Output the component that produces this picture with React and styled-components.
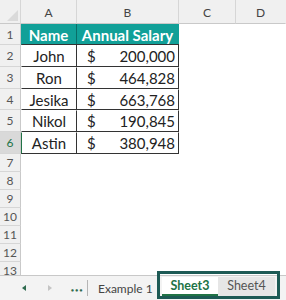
import React from "react";
import styled, { createGlobalStyle } from "styled-components";

const Global = createGlobalStyle`
	html, body {
		margin: 0;
		padding: 0;
		background: #fff;
		overflow: hidden;
	}
	body {
		font-family: Lato, "Liberation Sans", sans-serif;
	}
`;

const cols = "21px 56px 102px 57px 50px";
const rowHeights = [24, 21, 22, 22, 21, 22, 22, 18, 18, 18, 18, 18, 18, 18];

const data = [
	{ name: "John", salary: "200,000" },
	{ name: "Ron", salary: "464,828" },
	{ name: "Jesika", salary: "663,768" },
	{ name: "Nikol", salary: "190,845" },
	{ name: "Astin", salary: "380,948" }
];

const Page = styled.div`
	width: 286px;
	height: 300px;
	display: flex;
	flex-direction: column;
	overflow: hidden;
`;

const Sheet = styled.div`
	height: 276px;
	overflow: hidden;
	display: grid;
	grid-template-columns: ${cols};
	grid-template-rows: ${rowHeights.map(h => h + "px").join(" ")};
`;

const Corner = styled.div`
	background: #f0f0f0;
	border-bottom: 1px solid #c9c9c9;
	border-right: 1px solid #d6d6d6;
	position: relative;
	&::after {
		content: "";
		position: absolute;
		right: 2px;
		bottom: 2px;
		border-style: solid;
		border-width: 0 0 11px 11px;
		border-color: transparent transparent #dadada transparent;
	}
`;

const ColHead = styled.div`
	background: #f0f0f0;
	border-bottom: 1px solid #c9c9c9;
	border-right: 1px solid ${p => (p.$last ? "transparent" : "#d6d6d6")};
	display: flex;
	align-items: flex-end;
	justify-content: center;
	padding-bottom: 3px;
	font-size: 12px;
	color: #444;
`;

const RowHead = styled.div`
	background: ${p => (p.$active ? "#d9d9d9" : "#f0f0f0")};
	border-bottom: 1px solid #d6d6d6;
	border-right: 1px solid #c9c9c9;
	display: flex;
	align-items: center;
	justify-content: center;
	font-size: 12px;
	color: ${p => (p.$active ? "#217346" : "#555")};
`;

const TitleCell = styled.div`
	background: #11a098;
	color: #fff;
	font-weight: 700;
	font-size: 15px;
	display: flex;
	align-items: center;
	justify-content: center;
	border-right: 1px solid ${p => (p.$last ? "#11a098" : "#0a6e68")};
	white-space: nowrap;
`;

const NameCell = styled.div`
	display: flex;
	align-items: center;
	justify-content: center;
	font-size: 15px;
	color: #222;
	border-bottom: 1px solid #333;
	border-right: 1px solid #333;
	border-left: 1px solid ${p => (p.$active ? "#217346" : "transparent")};
	border-top: 1px solid ${p => (p.$first ? "#333" : "transparent")};
	margin-top: ${p => (p.$first ? "-1px" : "0")};
`;

const MoneyCell = styled.div`
	display: flex;
	align-items: center;
	justify-content: space-between;
	padding: 0 3px 0 10px;
	font-size: 15px;
	color: #222;
	border-bottom: 1px solid #333;
	border-right: 1px solid #333;
	border-top: 1px solid ${p => (p.$first ? "#333" : "transparent")};
	margin-top: ${p => (p.$first ? "-1px" : "0")};
`;

const Empty = styled.div``;

const TabBar = styled.div`
	height: 24px;
	background: #f3f3f3;
	border-top: 1px solid #c8c8c8;
	display: flex;
	align-items: center;
	position: relative;
`;

const Arrow = styled.span`
	width: 0;
	height: 0;
	flex: none;
	border-style: solid;
	border-width: 3px ${p => (p.$left ? "4px" : "0")} 3px ${p => (p.$left ? "0" : "4px")};
	border-color: transparent ${p => (p.$left ? p.$color : "transparent")} transparent ${p => (p.$left ? "transparent" : p.$color)};
	margin-left: ${p => p.$ml}px;
`;

const Dots = styled.span`
	margin-left: 19px;
	width: 9px;
	flex: none;
	font-size: 5px;
	color: #2f6b4f;
	line-height: 1;
	padding-top: 5px;
	white-space: nowrap;
`;

const Divider = styled.span`
	width: 1px;
	height: 16px;
	background: #b5b5b5;
	margin-left: 7px;
	flex: none;
`;

const Tab = styled.span`
	font-size: 12px;
	color: #444;
	margin-left: 10px;
	width: 56px;
	flex: none;
	white-space: nowrap;
`;

const TabGroup = styled.div`
	margin-left: 8px;
	margin-top: -4px;
	display: flex;
	flex: none;
	height: 19px;
	position: relative;
	&::after {
		content: "";
		position: absolute;
		left: -5px;
		right: -5px;
		top: -6px;
		bottom: -3px;
		border: 3px solid #1d5a55;
	}
`;

const SheetTab = styled.div`
	width: ${p => p.$w}px;
	display: flex;
	align-items: center;
	justify-content: center;
	font-size: 12.5px;
	background: ${p => (p.$active ? "#fff" : "#e6e6e6")};
	color: ${p => (p.$active ? "#217346" : "#555")};
	font-weight: ${p => (p.$active ? 700 : 400)};
	border-bottom: 2px solid ${p => (p.$active ? "#217346" : "transparent")};
	box-sizing: border-box;
`;

export default function App() {
	return (
		<Page>
			<Global />
			<Sheet>
				<Corner />
				<ColHead>A</ColHead>
				<ColHead>B</ColHead>
				<ColHead>C</ColHead>
				<ColHead $last>D</ColHead>

				<RowHead>1</RowHead>
				<TitleCell>Name</TitleCell>
				<TitleCell $last>Annual Salary</TitleCell>
				<Empty />
				<Empty />

				{data.map((d, i) => (
					<React.Fragment key={d.name}>
						<RowHead $active={i === 4}>{i + 2}</RowHead>
						<NameCell $first={i === 0} $active={i === 4}>{d.name}</NameCell>
						<MoneyCell $first={i === 0}>
							<span>$</span>
							<span>{d.salary}</span>
						</MoneyCell>
						<Empty />
						<Empty />
					</React.Fragment>
				))}

				{[7, 8, 9, 10, 11, 12, 13].map(n => (
					<React.Fragment key={n}>
						<RowHead>{n}</RowHead>
						<Empty />
						<Empty />
						<Empty />
						<Empty />
					</React.Fragment>
				))}
			</Sheet>
			<TabBar>
				<Arrow $left $color="#2f6b4f" $ml={22} />
				<Arrow $color="#c4c4c4" $ml={22} />
				<Dots>● ● ●</Dots>
				<Divider />
				<Tab>Example 1</Tab>
				<TabGroup>
					<SheetTab $active $w={56}>Sheet3</SheetTab>
					<SheetTab $w={57}>Sheet4</SheetTab>
				</TabGroup>
			</TabBar>
		</Page>
	);
}
